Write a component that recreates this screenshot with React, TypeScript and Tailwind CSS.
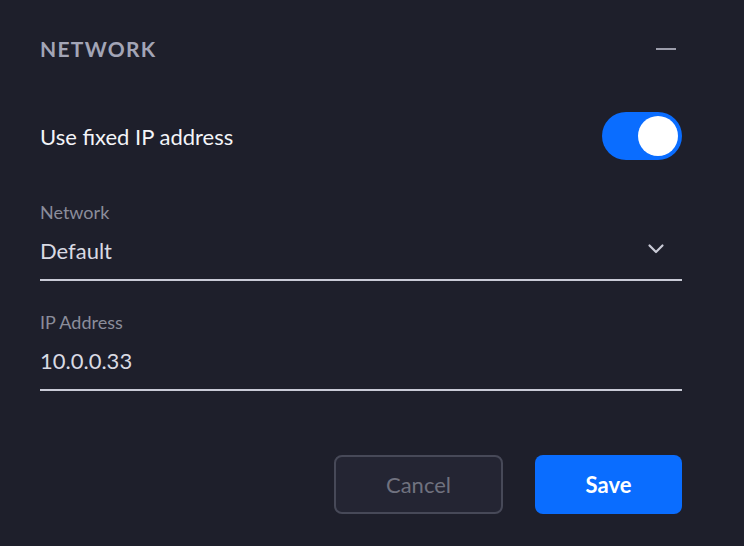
import { useState } from "react";

function Field({ label, value, select = false }: { label: string; value: string; select?: boolean }) {
  return (
    <div className="flex flex-col">
      <span className="text-[18px] leading-[22px] text-[#8b8d9b]">{label}</span>
      <div className="mt-[14px] flex h-[28px] items-center justify-between">
        <span className="text-[22px] leading-[28px] text-[#d9dae3]">{value}</span>
        {select && (
          <svg width="20" height="20" viewBox="0 0 20 20" className="mr-[16px] -mt-[4px] text-[#c9cad6]">
            <path d="M3.5 6.5 10 13l6.5-6.5" fill="none" stroke="currentColor" strokeWidth="2.2" strokeLinecap="round" strokeLinejoin="round" />
          </svg>
        )}
      </div>
      <div className="mt-[14px] h-[2px] bg-[#c9cad6]" />
    </div>
  );
}

export default function App() {
  const [fixed, setFixed] = useState(true);
  return (
    <div
      className="h-[546px] w-[744px] bg-[#1e1f2b] pl-[40px] pr-[62px] pt-[33px]"
      style={{ fontFamily: "Lato, 'Noto Sans', sans-serif" }}
    >
      {/* section header */}
      <div className="flex h-[32px] items-center justify-between">
        <h2 className="text-[21px] font-bold tracking-[0.06em] text-[#a3a5b6]">NETWORK</h2>
        <span className="mr-[6px] h-[2px] w-[20px] bg-[#9c9dab]" />
      </div>

      <div className="mt-[47px] flex h-[48px] items-center justify-between">
        <span className="text-[22px] text-[#f3f4f8]">Use fixed IP address</span>
        <button
          onClick={() => setFixed(!fixed)}
          className={`flex h-[48px] w-[80px] items-center rounded-full p-[4px] ${fixed ? "justify-end bg-[#0a6dff]" : "justify-start bg-[#3a3c4a]"}`}
        >
          <span className="size-[40px] rounded-full bg-white" />
        </button>
      </div>

      <div className="mt-[41px]">
        <Field label="Network" value="Default" select />
      </div>
      <div className="mt-[30px]">
        <Field label="IP Address" value="10.0.0.33" />
      </div>

      <div className="mt-[64px] flex justify-end gap-[32px]">
        <button className="h-[59px] w-[169px] rounded-[8px] border-2 border-[#474958] bg-[#242533] text-[22px] text-[#70727f]">
          Cancel
        </button>
        <button className="h-[59px] w-[147px] rounded-[8px] bg-[#0a6dff] text-[22px] font-bold text-white">
          Save
        </button>
      </div>
    </div>
  );
}
